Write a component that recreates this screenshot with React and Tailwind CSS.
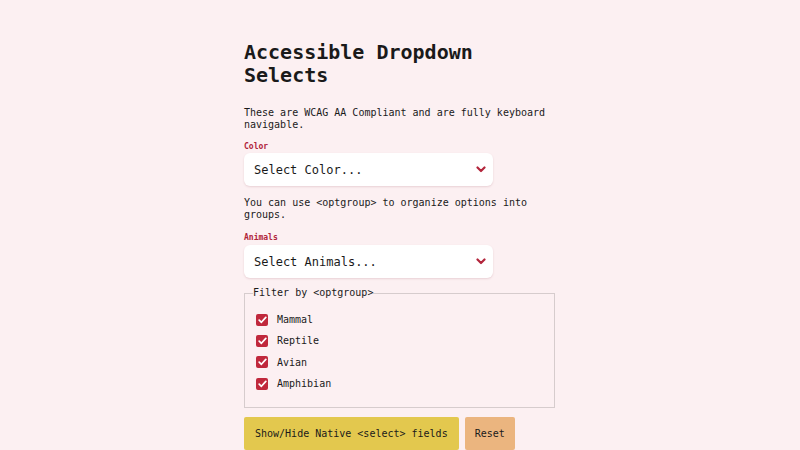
import React from "react";

function Chevron() {
  return (
    <svg width="10" height="7" viewBox="0 0 10 7" className="shrink-0">
      <path d="M1.5 1.5 L5 5 L8.5 1.5" fill="none" stroke="#b3263c" strokeWidth="2.2" strokeLinecap="round" strokeLinejoin="round" />
    </svg>
  );
}

function Select({ text }) {
  return (
    <div className="flex h-[33px] w-[249px] items-center justify-between rounded-[6px] bg-white pl-[10px] pr-[7px] shadow-[0_1px_2px_rgba(180,120,130,0.25)]">
      <span className="text-[12px] text-[#1a1a1a]" style={{ fontFamily: '"DejaVu Sans Mono", monospace' }}>{text}</span>
      <Chevron />
    </div>
  );
}

function Check({ label }) {
  return (
    <label className="flex h-[21.3px] items-center gap-[9px]">
      <span className="flex h-[12px] w-[12px] items-center justify-center rounded-[2px] bg-[#c0283c]">
        <svg width="9" height="8" viewBox="0 0 9 8">
          <path d="M1.2 4.2 L3.4 6.3 L7.8 1.4" fill="none" stroke="white" strokeWidth="1.7" strokeLinecap="round" strokeLinejoin="round" />
        </svg>
      </span>
      <span className="text-[10px] text-[#1a1a1a]">{label}</span>
    </label>
  );
}

export default function App() {
  return (
    <div className="min-h-[450px] w-full bg-[#fcf0f2]" style={{ fontFamily: '"DejaVu Sans Mono", "Liberation Mono", monospace' }}>
      <div className="mx-auto flex w-[312px] flex-col pt-[41px] text-[#1a1a1a]">
        <h1 className="text-[20px] font-bold leading-[23px]">Accessible Dropdown Selects</h1>
        <p className="mt-[20px] text-[10px] leading-[12px]">These are WCAG AA Compliant and are fully keyboard navigable.</p>
        <div className="mt-[11px] text-[8px] font-bold leading-[10px] text-[#b0243a]">Color</div>
        <div className="mt-[1px]"><Select text="Select Color..." /></div>
        <p className="mt-[11px] text-[10px] leading-[12px]">You can use &lt;optgroup&gt; to organize options into groups.</p>
        <div className="mt-[12px] text-[8px] font-bold leading-[10px] text-[#b0243a]">Animals</div>
        <div className="mt-[2px]"><Select text="Select Animals..." /></div>
        <fieldset className="mt-[9px] w-[311px] border border-[#d6cccd] px-[8px] pb-[13px] pt-[10px]">
          <legend className="px-0 text-[10px] leading-[12px]">Filter by &lt;optgroup&gt;</legend>
          <div className="flex flex-col pl-[3px]">
            <Check label="Mammal" />
            <Check label="Reptile" />
            <Check label="Avian" />
            <Check label="Amphibian" />
          </div>
        </fieldset>
        <div className="mt-[9px] flex gap-[6px]">
          <button className="h-[33px] rounded-[2px] bg-[#e3c84e] px-[11px] text-[10px] text-[#1a1a1a]">Show/Hide Native &lt;select&gt; fields</button>
          <button className="h-[33px] rounded-[2px] bg-[#ebb57f] px-[10px] text-[10px] text-[#1a1a1a]">Reset</button>
        </div>
      </div>
    </div>
  );
}
